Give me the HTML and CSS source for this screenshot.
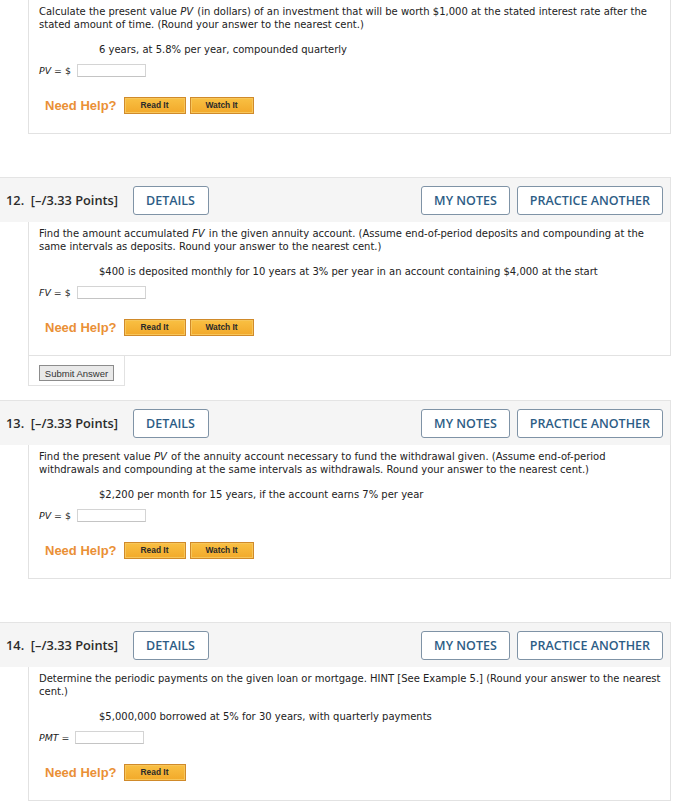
FILE: index.html
```html
<!DOCTYPE html>
<html>
<head>
<meta charset="utf-8">
<link rel="stylesheet" href="styles.css">
</head>
<body>
<div class="page">
  <div class="qbody cont">
    <p class="txt">Calculate the present value <i class="var">PV</i> (in dollars) of an investment that will be worth $1,000 at the stated interest rate after the stated amount of time. (Round your answer to the nearest cent.)</p>
    <p class="given">6 years, at 5.8% per year, compounded quarterly</p>
    <div class="answer"><span class="lbl"><i>PV</i> = $</span><span class="inp"></span></div>
    <div class="help"><span class="need">Need Help?</span><span class="hbtn">Read It</span><span class="hbtn wide">Watch It</span></div>
  </div>

  <section class="q gap-lg">
    <div class="qhead">
      <span class="pts">12.&nbsp; [–/3.33 Points]</span>
      <span class="btn details">DETAILS</span>
      <span class="spacer"></span>
      <span class="btn">MY NOTES</span>
      <span class="btn">PRACTICE ANOTHER</span>
    </div>
    <div class="qbody">
      <p class="txt">Find the amount accumulated <i class="var">FV</i> in the given annuity account. (Assume end-of-period deposits and compounding at the same intervals as deposits. Round your answer to the nearest cent.)</p>
      <p class="given">$400 is deposited monthly for 10 years at 3% per year in an account containing $4,000 at the start</p>
      <div class="answer"><span class="lbl"><i>FV</i> = $</span><span class="inp"></span></div>
      <div class="help"><span class="need">Need Help?</span><span class="hbtn">Read It</span><span class="hbtn wide">Watch It</span></div>
    </div>
    <div class="submit"><span class="sbtn">Submit Answer</span></div>
  </section>

  <section class="q gap-sm">
    <div class="qhead">
      <span class="pts">13.&nbsp; [–/3.33 Points]</span>
      <span class="btn details">DETAILS</span>
      <span class="spacer"></span>
      <span class="btn">MY NOTES</span>
      <span class="btn">PRACTICE ANOTHER</span>
    </div>
    <div class="qbody">
      <p class="txt">Find the present value <i class="var">PV</i> of the annuity account necessary to fund the withdrawal given. (Assume end-of-period withdrawals and compounding at the same intervals as withdrawals. Round your answer to the nearest cent.)</p>
      <p class="given">$2,200 per month for 15 years, if the account earns 7% per year</p>
      <div class="answer"><span class="lbl"><i>PV</i> = $</span><span class="inp"></span></div>
      <div class="help"><span class="need">Need Help?</span><span class="hbtn">Read It</span><span class="hbtn wide">Watch It</span></div>
    </div>
  </section>

  <section class="q gap-lg">
    <div class="qhead">
      <span class="pts">14.&nbsp; [–/3.33 Points]</span>
      <span class="btn details">DETAILS</span>
      <span class="spacer"></span>
      <span class="btn">MY NOTES</span>
      <span class="btn">PRACTICE ANOTHER</span>
    </div>
    <div class="qbody">
      <p class="txt">Determine the periodic payments on the given loan or mortgage. HINT [See Example 5.] (Round your answer to the nearest cent.)</p>
      <p class="given">$5,000,000 borrowed at 5% for 30 years, with quarterly payments</p>
      <div class="answer"><span class="lbl"><i>PMT</i> =</span><span class="inp"></span></div>
      <div class="help"><span class="need">Need Help?</span><span class="hbtn">Read It</span></div>
    </div>
  </section>
</div>
</body>
</html>
```

FILE: styles.css
```css
html, body {
  margin: 0;
  padding: 0;
  background: #ffffff;
}

.page {
  width: 671px;
  font-family: "DejaVu Sans", Verdana, sans-serif;
  color: #222;
}

.qbody {
  margin-left: 28px;
  width: 643px;
  box-sizing: border-box;
  border: 1px solid #e2e2e2;
  border-top: none;
  padding: 5px 9px 19px 10px;
  background: #fff;
  font-size: 10px;
  line-height: 13px;
}

.txt {
  margin: 0;
}

.var {
  padding-right: 1px;
}

.given {
  margin: 12px 0 0 60px;
}

.answer {
  margin-top: 7px;
  display: flex;
  align-items: center;
  height: 15px;
}

.lbl {
  font-size: 9.4px;
  margin-right: 6px;
}

.inp {
  display: inline-block;
  width: 67px;
  height: 11px;
  border: 1px solid #d4d4d4;
  border-bottom-color: #c4c4c4;
  background: #fff;
}

.help {
  margin-top: 18px;
  display: flex;
  align-items: center;
  height: 18px;
  padding-left: 6px;
  font-family: "Liberation Sans", Arial, sans-serif;
}

.need {
  font-size: 13px;
  font-weight: bold;
  color: #ea9036;
  margin-right: 7px;
}

.hbtn {
  display: inline-flex;
  align-items: center;
  justify-content: center;
  box-sizing: border-box;
  width: 62px;
  height: 17px;
  margin-right: 4px;
  border: 1px solid #d08a2a;
  box-shadow: inset 0 0 0 1px #f7c65a;
  background: linear-gradient(#f9c043, #f2a92a);
  font-size: 8.4px;
  font-weight: bold;
  color: #2a2a2a;
}

.hbtn.wide {
  width: 64px;
}

.q.gap-lg {
  margin-top: 43px;
}

.q.gap-sm {
  margin-top: 14px;
}

.qhead {
  display: flex;
  align-items: center;
  height: 45px;
  box-sizing: border-box;
  border-top: 1px solid #e4e4e4;
  border-right: 1px solid #e4e4e4;
  background: #f5f5f5;
  padding: 0 7px 0 6px;
  font-family: "Open Sans", sans-serif;
}

.pts {
  font-size: 12.8px;
  font-weight: 600;
  color: #2b2b2b;
  width: 127px;
}

.btn {
  display: inline-flex;
  align-items: center;
  box-sizing: border-box;
  height: 29px;
  padding: 0 12px;
  margin-left: 7px;
  border: 1px solid #7f93a6;
  border-radius: 3px;
  background: #fff;
  font-size: 12.5px;
  font-weight: 600;
  color: #2d5d86;
}

.btn.details {
  margin-left: 0;
  width: 76px;
}

.spacer {
  flex: 1;
}

.submit {
  display: flex;
  align-items: flex-start;
  margin-left: 28px;
  width: 97px;
  height: 30px;
  box-sizing: border-box;
  border: 1px solid #e2e2e2;
  border-top: none;
  padding: 9px 0 0 10px;
}

.sbtn {
  display: inline-flex;
  align-items: center;
  justify-content: center;
  box-sizing: border-box;
  width: 75px;
  height: 16px;
  border: 1px solid #8c8c8c;
  background: #e9e9e9;
  font-family: "Liberation Sans", Arial, sans-serif;
  font-size: 9.5px;
  color: #333;
}
```
